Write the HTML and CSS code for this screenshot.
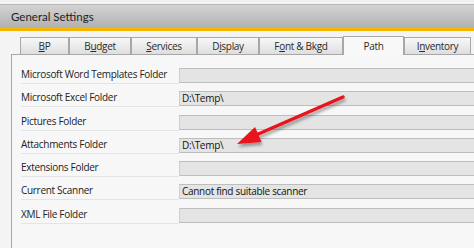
FILE: index.html
```html
<!DOCTYPE html>
<html lang="en">
<head>
    <meta charset="UTF-8">
    <title>General Settings</title>
    <link rel="stylesheet" href="styles.css">
</head>
<body>
    <div class="window">
        <div class="titlebar">General Settings</div>
        <div class="tabs">
            <div class="tab t-bp"><u>B</u>P</div>
            <div class="tab t-budget">B<u>u</u>dget</div>
            <div class="tab t-services"><u>S</u>ervices</div>
            <div class="tab t-display">D<u>i</u>splay</div>
            <div class="tab t-font">F<u>o</u>nt &amp; Bkgd</div>
            <div class="tab t-path active">Path</div>
            <div class="tab t-inventory">I<u>n</u>ventory</div>
        </div>
        <div class="panel">
            <div class="row">
                <span class="label">Microsoft Word Templates Folder</span>
                <span class="field"></span>
            </div>
            <div class="row">
                <span class="label">Microsoft Excel Folder</span>
                <span class="field">D:\Temp\</span>
            </div>
            <div class="row">
                <span class="label">Pictures Folder</span>
                <span class="field"></span>
            </div>
            <div class="row">
                <span class="label">Attachments Folder</span>
                <span class="field">D:\Temp\</span>
            </div>
            <div class="row">
                <span class="label">Extensions Folder</span>
                <span class="field"></span>
            </div>
            <div class="row">
                <span class="label">Current Scanner</span>
                <span class="field">Cannot find suitable scanner</span>
            </div>
            <div class="row">
                <span class="label">XML File Folder</span>
                <span class="field"></span>
            </div>

            <!-- annotation arrow drawn over the form -->
            <svg class="arrow" width="130" height="70" viewBox="0 0 130 70">
                <defs>
                    <filter id="shadow" x="-20%" y="-20%" width="140%" height="150%">
                        <feDropShadow dx="1" dy="3" stdDeviation="1.5" flood-color="#000" flood-opacity="0.35"/>
                    </filter>
                </defs>
                <g filter="url(#shadow)">
                    <line x1="113" y1="8" x2="26" y2="46" stroke="#e8121a" stroke-width="3.5" stroke-linecap="round"/>
                    <polygon points="7,55 25,38 31.5,53" fill="#e8121a"/>
                </g>
            </svg>
        </div>
    </div>
</body>
</html>
```

FILE: styles.css
```css
body {
    margin: 0;
    font-family: "Open Sans", "Noto Sans", sans-serif;
    font-size: 10px;
    letter-spacing: -0.3px;
    color: #1a1a1a;
}
.window {
    width: 474px;
    height: 248px;
    overflow: hidden;
    background: #f4f4f4;
    border-top: 2px solid #f0f0f0;
    box-sizing: border-box;
    display: flex;
    flex-direction: column;
}
.titlebar {
    margin-top: 2px;
    height: 23px;
    line-height: 23px;
    padding-left: 11px;
    font-family: Lato, "Open Sans", sans-serif;
    font-size: 11.5px;
    letter-spacing: 0;
    color: #1e1e1e;
    background: linear-gradient(#d4d4d4, #b0b0b0);
    border-top: 1px solid #b8b8b8;
    border-bottom: 3px solid #f4b400;
}
.tabs {
    display: flex;
    align-items: flex-end;
    padding-left: 20px;
    margin-top: 4px;
    height: 19px;
}
.tab {
    box-sizing: border-box;
    height: 17px;
    line-height: 16px;
    white-space: nowrap;
    text-align: center;
    color: #2a2a2a;
    background: linear-gradient(#f8f8f8, #dedede);
    border: 1px solid #a8a8a8;
    border-bottom: none;
}
.t-bp { width: 49px; }
.t-budget { width: 62px; }
.t-services { width: 66px; }
.t-display { width: 62px; }
.t-font { width: 84px; }
.t-path { width: 61px; }
.t-inventory { width: 67px; }
.tab u {
    text-decoration-thickness: 1px;
    text-underline-offset: 1px;
}
.tab.active {
    height: 19px;
    line-height: 18px;
    background: #f8f8f8;
    position: relative;
    z-index: 1;
    margin-bottom: -1px;
}
.panel {
    flex: 1;
    position: relative;
    margin-left: 11px;
    border-top: 1px solid #a8a8a8;
    border-left: 1px solid #a8a8a8;
    background: #f7f7f7;
    padding-top: 12px;
    display: flex;
    flex-direction: column;
    gap: 8.3px;
}
.row {
    display: grid;
    grid-template-columns: 167px 1fr;
    align-items: center;
    height: 15px;
    flex-shrink: 0;
}
.label {
    margin-left: 9px;
    padding-bottom: 2px;
    white-space: nowrap;
    border-bottom: 1px solid #e4e4e4;
    color: #222;
}
.field {
    height: 13px;
    line-height: 13px;
    padding-left: 2px;
    white-space: nowrap;
    background: #e4e4e4;
    border-top: 1px solid #bdbdbd;
    border-bottom: 1px solid #bdbdbd;
    border-left: 1px solid #cfcfcf;
    color: #111;
}
.arrow {
    position: absolute;
    left: 218px;
    top: 34px;
}
```
